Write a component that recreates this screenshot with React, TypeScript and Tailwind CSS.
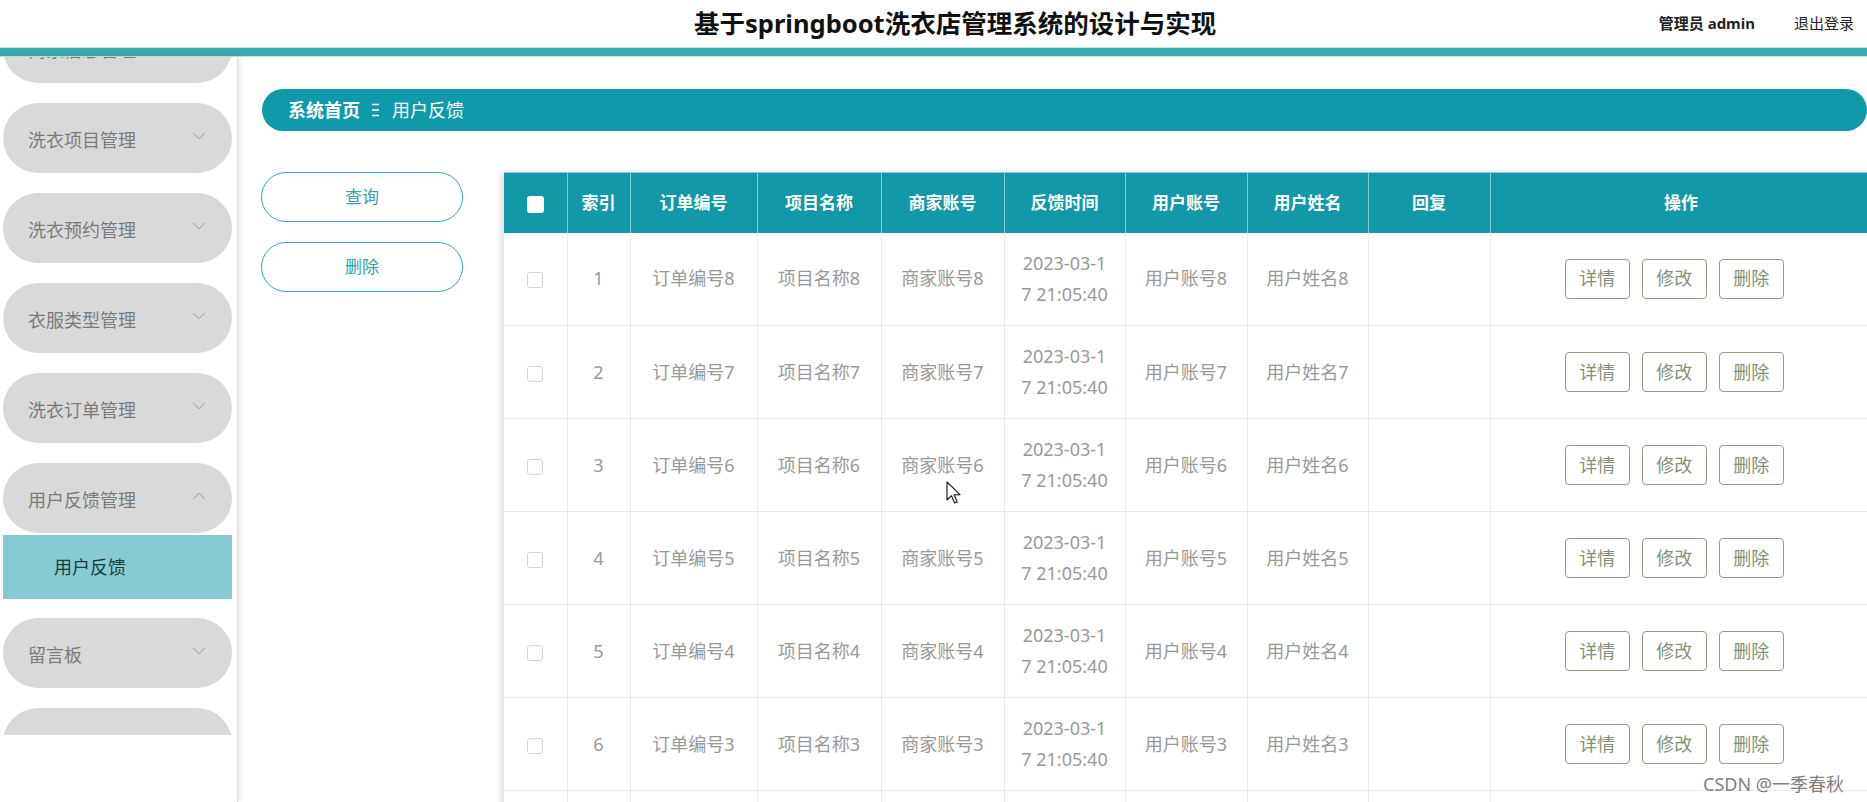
import React from "react";
import { ChevronDown, ChevronUp } from "lucide-react";

const FONT = { fontFamily: '"Noto Sans", "Noto Sans CJK SC", sans-serif' };

const menus = [
  { label: "商家信息管理" },
  { label: "洗衣项目管理" },
  { label: "洗衣预约管理" },
  { label: "衣服类型管理" },
  { label: "洗衣订单管理" },
  { label: "用户反馈管理", open: true, children: ["用户反馈"] },
  { label: "留言板" },
  { label: "系统管理" },
];

const rows = [8, 7, 6, 5, 4, 3, 2];

const Pill = ({ label, open }: { label: string; open?: boolean }) => (
  <div className="h-[70px] w-[229px] rounded-full bg-[#d9d9d9] flex items-center pl-[25px] pr-[22px] shrink-0">
    <span className="flex-1 text-[18px] text-[#7b7b7b] whitespace-nowrap mt-[5px]">{label}</span>
    {open ? (
      <ChevronUp size={22} strokeWidth={1} className="text-[#8f8f8f] -mt-[4px]" />
    ) : (
      <ChevronDown size={22} strokeWidth={1} className="text-[#8f8f8f] -mt-[4px]" />
    )}
  </div>
);

const Sidebar = () => (
  <aside className="w-[238px] shrink-0 border-r border-[#dcdcdc] shadow-[2px_0_5px_rgba(0,0,0,0.10)] bg-white relative z-10">
    <div className="h-[678px] overflow-hidden">
      <div className="-mt-[44px] pl-[3px] flex flex-col">
        {menus.map((m) => (
          <div key={m.label} className={m.children ? "mb-[19px]" : "mb-[20px]"}>
            <Pill label={m.label} open={m.open} />
            {m.children &&
              m.children.map((c) => (
                <div
                  key={c}
                  className="mt-[2px] h-[64px] w-[229px] bg-[#86cbd1] flex items-center pl-[51px] text-[18px] text-[#1f3a3d]"
                >
                  {c}
                </div>
              ))}
          </div>
        ))}
      </div>
    </div>
  </aside>
);

const cols = [
  { key: "check", label: "", w: 63 },
  { key: "idx", label: "索引", w: 63 },
  { key: "order", label: "订单编号", w: 127 },
  { key: "item", label: "项目名称", w: 124 },
  { key: "shop", label: "商家账号", w: 123 },
  { key: "time", label: "反馈时间", w: 121 },
  { key: "user", label: "用户账号", w: 122 },
  { key: "name", label: "用户姓名", w: 121 },
  { key: "reply", label: "回复", w: 122 },
  { key: "ops", label: "操作", w: 382 },
];

const OpButton = ({ children }: { children: React.ReactNode }) => (
  <button className="h-[40px] w-[65px] rounded-[4px] border-[1.5px] border-[#8f9d82] text-[18px] text-[#84917a] bg-white">
    {children}
  </button>
);

const DataTable = () => (
  <div className="shrink-0 shadow-[-3px_0_6px_rgba(0,0,0,0.12)]">
    <table className="border-collapse table-fixed" style={{ width: 1368 }}>
      <colgroup>
        {cols.map((c) => (
          <col key={c.key} style={{ width: c.w }} />
        ))}
      </colgroup>
      <thead>
        <tr className="h-[60px] bg-[#1298a6]">
          {cols.map((c) => (
            <th
              key={c.key}
              className="border-r border-t border-[#7fd0d6] text-white text-[17px] font-bold text-center"
            >
              {c.key === "check" ? (
                <span className="inline-block w-[17px] h-[17px] rounded-[3px] bg-white align-middle" />
              ) : (
                c.label
              )}
            </th>
          ))}
        </tr>
      </thead>
      <tbody>
        {rows.map((n, i) => (
          <tr key={n} className="h-[93px]">
            <td className="border-r border-b border-[#e9e9e9] text-center">
              <span className="inline-block w-[16px] h-[16px] rounded-[3px] border border-[#d4d4d4] bg-white align-middle" />
            </td>
            <td className="border-r border-b border-[#e9e9e9] text-center text-[18px] text-[#999]">{i + 1}</td>
            <td className="border-r border-b border-[#e9e9e9] text-center text-[18px] text-[#999]">订单编号{n}</td>
            <td className="border-r border-b border-[#e9e9e9] text-center text-[18px] text-[#999]">项目名称{n}</td>
            <td className="border-r border-b border-[#e9e9e9] text-center text-[18px] text-[#999]">商家账号{n}</td>
            <td className="border-r border-b border-[#e9e9e9] text-center text-[18px] text-[#999] px-[16px] leading-[31px] break-all">
              2023-03-17 21:05:40
            </td>
            <td className="border-r border-b border-[#e9e9e9] text-center text-[18px] text-[#999]">用户账号{n}</td>
            <td className="border-r border-b border-[#e9e9e9] text-center text-[18px] text-[#999]">用户姓名{n}</td>
            <td className="border-r border-b border-[#e9e9e9]" />
            <td className="border-b border-[#e9e9e9]">
              <div className="flex justify-center gap-[12px] pr-[14px]">
                <OpButton>详情</OpButton>
                <OpButton>修改</OpButton>
                <OpButton>删除</OpButton>
              </div>
            </td>
          </tr>
        ))}
      </tbody>
    </table>
  </div>
);

export default function App() {
  return (
    <div className="w-[1867px] h-[802px] overflow-hidden bg-white relative" style={FONT}>
      {/* 顶部 */}
      <header className="h-[47px] flex items-center">
        <h1 className="ml-[694px] text-[25.5px] font-bold text-[#111] whitespace-nowrap">
          基于springboot洗衣店管理系统的设计与实现
        </h1>
        <div className="ml-auto flex items-center gap-[39px] pr-[13px] text-[15px] text-[#222]">
          <span className="font-bold">管理员 admin</span>
          <span>退出登录</span>
        </div>
      </header>
      <div className="h-[10px] bg-[#36a9b1] border-y border-[#bfe6e9]" />

      <div className="flex h-[745px]">
        <Sidebar />

        <main className="flex-1 min-w-0 overflow-hidden pt-[32px] pl-[24px]">
          {/* 面包屑 */}
          <div className="h-[42px] rounded-full bg-[#1099a8] flex items-center pl-[26px] text-[18px] text-white">
            <span className="font-bold">系统首页</span>
            <svg width="9" height="14" viewBox="0 0 9 14" className="ml-[11px] mr-[12px]">
              <path d="M1 1.5h7M1 7h7M1 12.5h7" stroke="white" strokeWidth="1.3" fill="none" />
            </svg>
            <span>用户反馈</span>
          </div>

          <div className="flex mt-[41px]">
            <div className="w-[202px] shrink-0 flex flex-col gap-[20px] -ml-[1px]">
              <button className="h-[50px] rounded-full border-[1.5px] border-[#3aa6ae] text-[#3aa1a9] text-[17px] bg-white">
                查询
              </button>
              <button className="h-[50px] rounded-full border-[1.5px] border-[#3aa6ae] text-[#3aa1a9] text-[17px] bg-white">
                删除
              </button>
            </div>
            <div className="ml-[41px]">
              <DataTable />
            </div>
          </div>
        </main>
      </div>

      {/* 鼠标指针 */}
      <svg
        width="17"
        height="25"
        viewBox="0 0 17 25"
        className="absolute left-[946px] top-[481px]"
      >
        <path
          d="M1 1 L1 19 L5.5 14.8 L8.6 22 L11.2 20.9 L8.2 13.9 L14 13.6 Z"
          fill="white"
          stroke="#222"
          strokeWidth="1.2"
          strokeLinejoin="round"
        />
      </svg>

      {/* 水印 */}
      <div className="absolute left-[1703px] top-[771px] text-[18px] text-[#7f7f7f] whitespace-nowrap [text-shadow:0_0_2px_white]">
        CSDN @一季春秋
      </div>
    </div>
  );
}
